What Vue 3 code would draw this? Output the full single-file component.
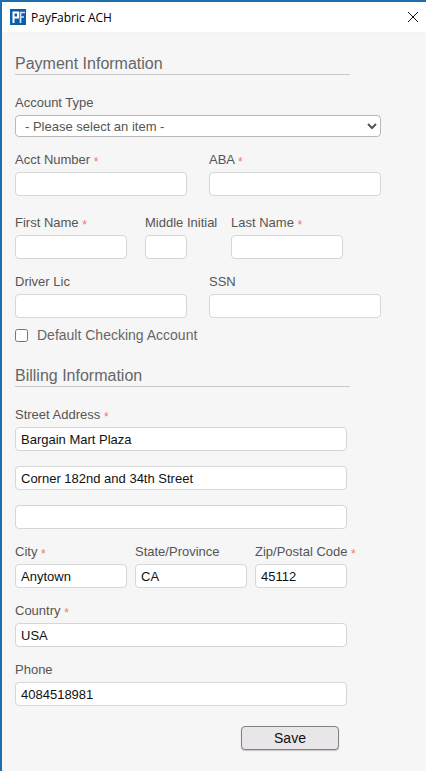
<script setup>
</script>

<template>
  <div class="window">
    <header class="titlebar">
      <svg class="logo" viewBox="0 0 16 16" aria-hidden="true">
        <rect width="16" height="16" fill="#0b5cab" />
        <path d="M3.5 14V3.5H8V8.5H3.5" fill="none" stroke="#fff" stroke-width="2" />
        <path d="M10.5 14V3.5H15M10.5 8H14" fill="none" stroke="#d5e6f8" stroke-width="1.7" />
      </svg>
      <span class="title">PayFabric ACH</span>
      <svg class="close" viewBox="0 0 10 10" aria-hidden="true">
        <path d="M0 0L10 10M10 0L0 10" stroke="#111" stroke-width="1" fill="none" />
      </svg>
    </header>

    <main class="form">
      <h2 class="section">Payment Information</h2>

      <div class="field type-field">
        <label>Account Type</label>
        <select class="select">
          <option>- Please select an item -</option>
        </select>
      </div>

      <div class="row two acct-row">
        <div class="field"><label>Acct Number <i>*</i></label><input class="input" /></div>
        <div class="field"><label>ABA <i>*</i></label><input class="input" /></div>
      </div>

      <div class="row names">
        <div class="field"><label>First Name <i>*</i></label><input class="input w112" /></div>
        <div class="field"><label>Middle Initial</label><input class="input w42" /></div>
        <div class="field"><label>Last Name <i>*</i></label><input class="input w112" /></div>
      </div>

      <div class="row two lic-row">
        <div class="field"><label>Driver Lic</label><input class="input" /></div>
        <div class="field"><label>SSN</label><input class="input" /></div>
      </div>

      <label class="check"><input type="checkbox" /><span>Default Checking Account</span></label>

      <h2 class="section billing">Billing Information</h2>

      <div class="field street">
        <label>Street Address <i>*</i></label>
        <input class="input wide" value="Bargain Mart Plaza" />
        <input class="input wide" value="Corner 182nd and 34th Street" />
        <input class="input wide" />
      </div>

      <div class="row city">
        <div class="field"><label>City <i>*</i></label><input class="input" value="Anytown" /></div>
        <div class="field"><label>State/Province</label><input class="input" value="CA" /></div>
        <div class="field"><label>Zip/Postal Code <i>*</i></label><input class="input" value="45112" /></div>
      </div>

      <div class="field country">
        <label>Country <i>*</i></label>
        <input class="input wide" value="USA" />
      </div>

      <div class="field phone">
        <label>Phone</label>
        <input class="input wide" value="4084518981" />
      </div>

      <div class="actions"><button class="save" type="button">Save</button></div>
    </main>
  </div>
</template>

<style scoped>
.window {
  width: 426px;
  height: 771px;
  box-sizing: border-box;
  border-top: 2px solid #1f6cae;
  border-left: 2px solid #1f6cae;
  background: #f6f6f6;
  font-family: "Liberation Sans", Arial, sans-serif;
  overflow: hidden;
}
.titlebar {
  height: 30px;
  background: #fff;
  display: flex;
  align-items: center;
  padding: 0 8px;
}
.logo { width: 16px; height: 16px; flex: none; }
.title {
  margin-left: 5px;
  font: 12px "Open Sans", sans-serif;
  color: #000;
}
.close { width: 10px; height: 10px; margin-left: auto; }
.form {
  padding: 0 0 0 13px;
  background: #f6f6f6;
  border-top: 1px solid #f5f2f5;
}
.section {
  width: 335px;
  margin: 0;
  padding-top: 20px;
  height: 21px;
  line-height: 21px;
  font-size: 16px;
  font-weight: 400;
  color: #666;
  border-bottom: 1px solid #c8c8c8;
  box-sizing: content-box;
}
.billing { padding-top: 0; margin-top: 21px; }
.field { display: flex; flex-direction: column; }
label {
  display: block;
  height: 18px;
  line-height: 18px;
  margin-bottom: 3px;
  font-size: 13px;
  color: #555;
  white-space: nowrap;
}
label i {
  font-style: normal;
  color: #f0796c;
  font-size: 12px;
  vertical-align: -2px;
}
.type-field { margin-top: 19px; }
.select {
  width: 366px;
  height: 22px;
  box-sizing: border-box;
  border: 1px solid #b9b9b9;
  border-radius: 4px;
  background: #fff;
  color: #555;
  font: 13px "Liberation Sans", Arial, sans-serif;
  padding-left: 5px;
}
.input {
  height: 24px;
  box-sizing: border-box;
  border: 1px solid #d6d6d6;
  border-radius: 4px;
  background: #fff;
  padding: 0 5px;
  margin: 0;
  font: 13px "Liberation Sans", Arial, sans-serif;
  color: #111;
  outline: none;
}
.row { display: grid; }
.two { grid-template-columns: 172px 172px; column-gap: 22px; }
.two .input { width: 172px; }
.acct-row { margin-top: 14px; }
.names { grid-template-columns: 130px 86px 112px; margin-top: 18px; }
.w112 { width: 112px; }
.w42 { width: 42px; }
.lic-row { margin-top: 14px; }
.check {
  display: flex;
  align-items: center;
  gap: 9px;
  height: 18px;
  margin: 8px 0 0;
  font-size: 14px;
  color: #666;
}
.check input { width: 13px; height: 13px; margin: 1px 0 0; flex: none; }
.wide { width: 332px; }
.street { margin-top: 19px; }
.street .input + .input { margin-top: 15px; }
.city { grid-template-columns: 112px 112px 92px; column-gap: 8px; margin-top: 14px; }
.city .input { width: 100%; }
.country { margin-top: 14px; }
.phone { margin-top: 14px; }
.actions { padding: 20px 0 0 226px; }
.save {
  display: block;
  width: 98px;
  height: 24px;
  padding: 0;
  border: 1px solid #808080;
  border-radius: 4px;
  background: #e8e6e8;
  box-shadow: 0 1px 1px rgba(0, 0, 0, 0.2);
  font: 14px "Liberation Sans", Arial, sans-serif;
  color: #111;
}
</style>
